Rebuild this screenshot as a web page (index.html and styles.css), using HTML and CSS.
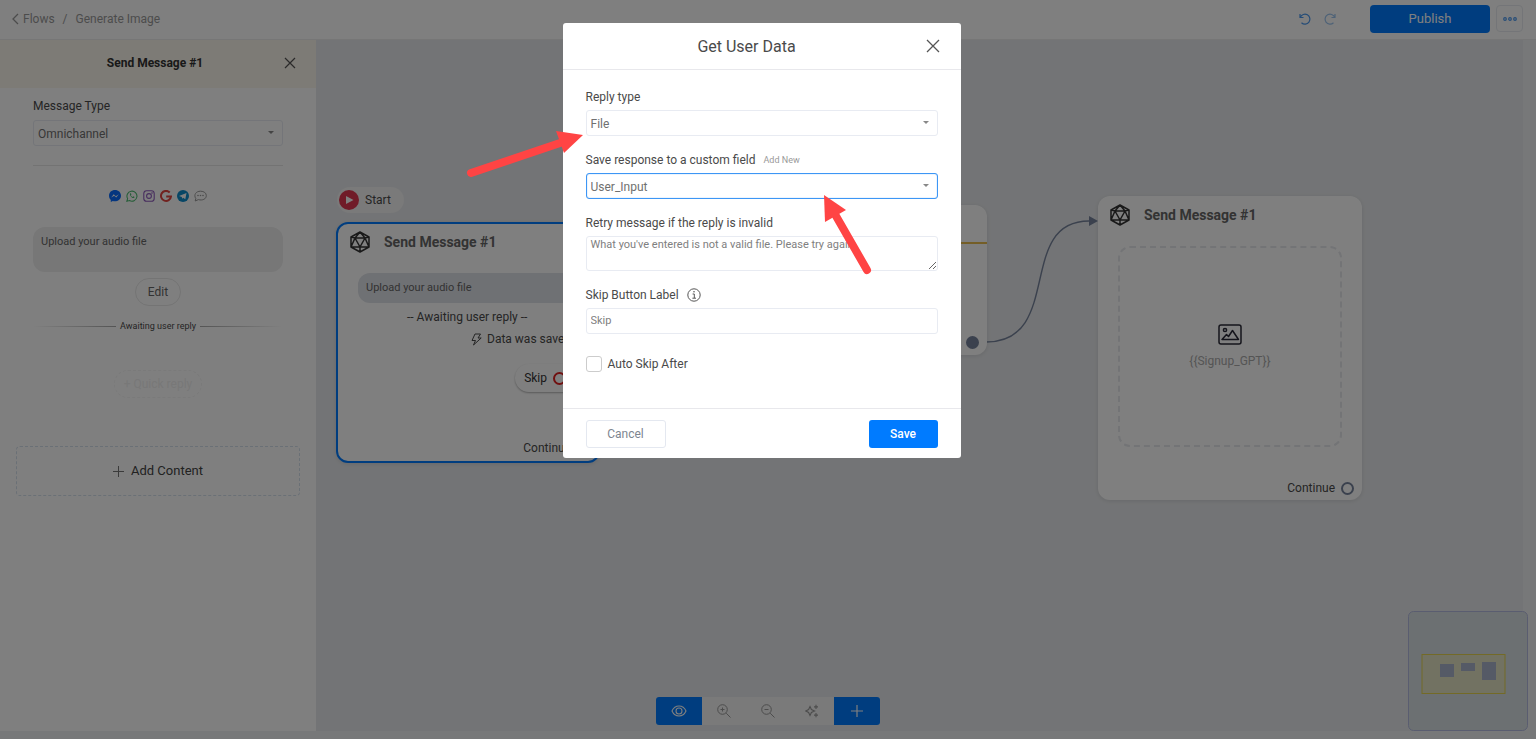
FILE: index.html
```html
<!DOCTYPE html>
<html lang="en">
<head>
    <meta charset="UTF-8">
    <meta name="viewport" content="width=device-width, initial-scale=1.0">
    <title>Generate Image - Flows</title>
    <link rel="stylesheet" href="styles.css">
</head>
<body>

    <!-- Shared icon -->
    <svg class="sprite" aria-hidden="true">
        <symbol id="icosahedron" viewBox="0 0 20 22">
            <path d="M10 1 L19 6 V16 L10 21 L1 16 V6 Z M10 1 L5 7 L1 6 M10 1 L15 7 L19 6 M5 7 H15 L10 16 Z M5 7 L1 16 L10 16 L19 16 L15 7 M10 16 V21" fill="none" stroke="currentColor" stroke-width="1.5" stroke-linejoin="round"/>
        </symbol>
    </svg>

    <header class="topbar">
        <nav class="breadcrumb">
            <a href="#" class="back">
                <svg width="7" height="12" viewBox="0 0 7 12"><path d="M6 1 L1 6 L6 11" fill="none" stroke="currentColor" stroke-width="1.3"/></svg>
                Flows
            </a>
            <span>/</span>
            <span>Generate Image</span>
        </nav>
        <div class="top-actions">
            <button class="icon-btn" aria-label="Undo">
                <svg width="12" height="12" viewBox="0 0 12 12"><path d="M1 1 V4.5 H4.5 M1.3 4.3 A5 5 0 1 1 2.5 9.8" fill="none" stroke="currentColor" stroke-width="1.2"/></svg>
            </button>
            <button class="icon-btn redo" aria-label="Redo">
                <svg width="12" height="12" viewBox="0 0 12 12"><path d="M11 1 V4.5 H7.5 M10.7 4.3 A5 5 0 1 0 9.5 9.8" fill="none" stroke="currentColor" stroke-width="1.2"/></svg>
            </button>
            <button class="btn-primary publish">Publish</button>
            <button class="more" aria-label="More">
                <svg width="14" height="4" viewBox="0 0 14 4"><g fill="none" stroke="currentColor" stroke-width="1.2"><circle cx="2" cy="2" r="1.3"/><circle cx="7" cy="2" r="1.3"/><circle cx="12" cy="2" r="1.3"/></g></svg>
            </button>
        </div>
    </header>

    <div class="workspace">
        <aside class="sidebar">
            <div class="sidebar-header">
                <h2>Send Message #1</h2>
                <button class="close" aria-label="Close panel">
                    <svg width="12" height="12" viewBox="0 0 12 12"><path d="M1 1 L11 11 M11 1 L1 11" stroke="currentColor" stroke-width="1.2"/></svg>
                </button>
            </div>
            <div class="sidebar-body">
                <label for="messageType">Message Type</label>
                <div class="select-wrap">
                    <select id="messageType"><option>Omnichannel</option></select>
                </div>
                <hr>
                <div class="channels">
                    <svg width="12" height="12" viewBox="0 0 12 12"><path d="M6 0 C2.6 0 0 2.4 0 5.7 C0 7.5 .7 8.9 1.8 9.9 V12 L3.8 11.1 C7.9 12.2 12 9.8 12 5.7 C12 2.4 9.4 0 6 0 Z" fill="#0a6cff"/><path d="M2.2 7.5 L4.7 4.2 L6.8 6.2 L9.8 4.2 L7.2 7.6 L5.2 5.8 Z" fill="#fff"/></svg>
                    <svg width="12" height="12" viewBox="0 0 12 12"><path d="M.9 11.2 L1.6 8.6 A5 5 0 1 1 3.5 10.5 Z" fill="none" stroke="#4ebc72" stroke-width="1.1"/><path d="M4.2 3.3 C3 4.3 5.7 8.8 8 8 L8.6 7 L7.2 6.3 L6.6 7 C5.9 6.8 5.1 5.8 4.9 5.2 L5.4 4.6 L4.9 3.3 Z" fill="#4ebc72"/></svg>
                    <svg width="12" height="12" viewBox="0 0 12 12"><g fill="none" stroke="#8f5bbd" stroke-width="1.1"><rect x=".8" y=".8" width="10.4" height="10.4" rx="2.8"/><circle cx="6" cy="6" r="2.4"/></g><circle cx="9" cy="3" r=".8" fill="#8f5bbd"/></svg>
                    <svg width="12" height="12" viewBox="0 0 12 12"><path d="M9.7 2.5 A5 5 0 1 0 11 6.4 H6.2" fill="none" stroke="#e2443f" stroke-width="2"/></svg>
                    <svg width="12" height="12" viewBox="0 0 12 12"><circle cx="6" cy="6" r="6" fill="#0f8ccb"/><path d="M2 6 L9.5 3 L8.3 9.3 L6.2 7.8 L5.2 8.8 L4.8 7 Z" fill="#fff"/></svg>
                    <svg width="13" height="12" viewBox="0 0 13 12"><path d="M1.2 11 L1.8 8.6 C-.6 4.8 2 1.2 6.5 1.2 C10 1.2 12.3 3 12.3 5.6 C12.3 9 8.5 10.8 4.4 9.6 Z" fill="none" stroke="#999" stroke-width="1"/><g fill="#999"><circle cx="4" cy="5.5" r=".8"/><circle cx="6.5" cy="5.5" r=".8"/><circle cx="9" cy="5.5" r=".8"/></g></svg>
                </div>
                <div class="message-bubble">Upload your audio file</div>
                <button class="edit">Edit</button>
                <div class="awaiting"><span>Awaiting user reply</span></div>
                <button class="quick-reply">+ Quick reply</button>
            </div>
            <button class="add-content">
                <svg width="11" height="11" viewBox="0 0 11 11"><path d="M5.5 0 V11 M0 5.5 H11" stroke="#777" stroke-width="1"/></svg>
                Add Content
            </button>
        </aside>

        <!-- Flow canvas -->
        <main class="canvas">
            <svg class="edge" width="120" height="140" viewBox="0 0 120 140">
                <path d="M4 132 C82 132 34 11 107 11" fill="none" stroke="#76839c" stroke-width="1.4"/>
                <path d="M107 6 L116 11 L107 16 Z" fill="#76839c"/>
            </svg>

            <div class="start">
                <svg width="20" height="20" viewBox="0 0 20 20"><circle cx="10" cy="10" r="10" fill="#e03650"/><path d="M7 6 L14.5 10 L7 14 Z" fill="#fff"/></svg>
                Start
            </div>

            <section class="node node-first">
                <h3><svg class="node-icon"><use href="#icosahedron"/></svg>Send Message #1</h3>
                <div class="node-bubble">Upload your audio file</div>
                <p class="node-wait">-- Awaiting user reply --</p>
                <p class="node-saved">
                    <svg width="11" height="13" viewBox="0 0 11 13"><path d="M4 1 H9.5 L7 5 H10.2 L2.5 12 L4.5 7.5 H1 Z" fill="none" stroke="currentColor" stroke-width="1" stroke-linejoin="round"/></svg>
                    Data was saved
                </p>
                <div class="skip-pill">Skip <span class="port port-red"></span></div>
                <div class="node-next">Continue <span class="port"></span></div>
            </section>

            <section class="node node-action">
                <div class="action-line"></div>
                <div class="node-next"><span class="port port-full"></span></div>
            </section>

            <section class="node node-image">
                <h3><svg class="node-icon"><use href="#icosahedron"/></svg>Send Message #1</h3>
                <div class="image-box">
                    <svg width="24" height="22" viewBox="0 0 24 22"><g fill="none" stroke="#2b2b38" stroke-width="1.5" stroke-linejoin="round"><rect x="1" y="1" width="22" height="19" rx="2"/><circle cx="7" cy="6" r="1.6"/><path d="M4 15.5 L8.5 10.5 L10.5 12.5 L14.5 6.5 L20.5 15.5 Z"/></g></svg>
                    {{Signup_GPT}}
                </div>
                <div class="node-next">Continue <span class="port"></span></div>
            </section>
        </main>

        <div class="toolbar">
            <button class="tool active" aria-label="Preview">
                <svg width="16" height="12" viewBox="0 0 16 12"><g fill="none" stroke="currentColor" stroke-width="1.1"><path d="M1 6 C4 -.6 12 -.6 15 6 C12 12.6 4 12.6 1 6 Z"/><circle cx="8" cy="6" r="3"/></g></svg>
            </button>
            <button class="tool" aria-label="Zoom in">
                <svg width="14" height="14" viewBox="0 0 14 14"><path d="M9.2 9.2 L13.5 13.5 M5.5 3.5 V7.5 M3.5 5.5 H7.5" stroke="currentColor"/><circle cx="5.5" cy="5.5" r="4.8" fill="none" stroke="currentColor"/></svg>
            </button>
            <button class="tool" aria-label="Zoom out">
                <svg width="14" height="14" viewBox="0 0 14 14"><path d="M9.2 9.2 L13.5 13.5 M3.5 5.5 H7.5" stroke="currentColor"/><circle cx="5.5" cy="5.5" r="4.8" fill="none" stroke="currentColor"/></svg>
            </button>
            <button class="tool" aria-label="Arrange">
                <svg width="14" height="14" viewBox="0 0 14 14"><path d="M5 2.5 L6.4 5.6 L9.5 7 L6.4 8.4 L5 11.5 L3.6 8.4 L.8 7 L3.6 5.6 Z M11 .8 V5 M9 2.9 H13 M11 9 V13.2 M9 11.1 H13" fill="none" stroke="currentColor" stroke-width="1.1"/></svg>
            </button>
            <button class="tool active" aria-label="Add block">
                <svg width="12" height="12" viewBox="0 0 12 12"><path d="M6 0 V12 M0 6 H12" stroke="currentColor" stroke-width="1.2"/></svg>
            </button>
        </div>

        <svg class="minimap" width="120" height="120" viewBox="0 0 120 120">
            <rect x=".5" y=".5" width="119" height="119" rx="5" fill="#d9e1e4" stroke="#b4bbe0"/>
            <rect x="14" y="43.5" width="83" height="39" fill="#e4e4c4" stroke="#e6d44e"/>
            <g fill="#abb4cc"><rect x="32" y="53" width="14" height="13"/><rect x="53" y="52" width="14" height="8"/><rect x="74" y="51" width="14" height="18"/></g>
        </svg>
    </div>

    <!-- Modal -->
    <div class="modal">
        <form class="modal-content">
            <div class="modal-header">
                <h1>Get User Data</h1>
                <button type="button" class="close" aria-label="Close">
                    <svg width="14" height="14" viewBox="0 0 14 14"><path d="M1 1 L13 13 M13 1 L1 13" stroke="currentColor" stroke-width="1.3"/></svg>
                </button>
            </div>
            <div class="modal-body">
                <div class="field">
                    <label for="replyType">Reply type</label>
                    <div class="select-wrap">
                        <select id="replyType"><option>File</option></select>
                    </div>
                </div>
                <div class="field">
                    <div class="label-row">
                        <label for="customField">Save response to a custom field</label>
                        <a href="#">Add New</a>
                    </div>
                    <div class="select-wrap selected">
                        <select id="customField"><option>User_Input</option></select>
                    </div>
                </div>
                <div class="field">
                    <label for="retryMessage">Retry message if the reply is invalid</label>
                    <textarea id="retryMessage" placeholder="What you've entered is not a valid file. Please try again."></textarea>
                </div>
                <div class="field">
                    <div class="label-row">
                        <label for="skipLabel">Skip Button Label</label>
                        <svg width="14" height="14" viewBox="0 0 14 14"><circle cx="7" cy="7" r="6.2" fill="none" stroke="#555"/><path d="M5.6 6 H7.3 V10 M5.4 10.2 H9" fill="none" stroke="#555"/><circle cx="7" cy="3.8" r=".8" fill="#555"/></svg>
                    </div>
                    <input type="text" id="skipLabel" placeholder="Skip">
                </div>
                <div class="check-row">
                    <input type="checkbox" id="autoSkip">
                    <label for="autoSkip">Auto Skip After</label>
                </div>
            </div>
            <div class="modal-footer">
                <button type="button" class="cancel">Cancel</button>
                <button type="button" class="btn-primary save">Save</button>
            </div>
        </form>
    </div>

    <!-- Pointer arrows -->
    <svg class="pointer pointer-type" width="120" height="50" viewBox="0 0 120 50">
        <path d="M6 42 L98 11" stroke="#ff4444" stroke-width="8" stroke-linecap="round"/>
        <path d="M118 4 L91 0 L99 22 Z" fill="#ff4444"/>
    </svg>
    <svg class="pointer pointer-field" width="60" height="84" viewBox="0 0 60 84">
        <path d="M47 75 L16 21" stroke="#ff4444" stroke-width="8" stroke-linecap="round"/>
        <path d="M4 0 L26 15 L5 27 Z" fill="#ff4444"/>
    </svg>

</body>
</html>
```
FILE: styles.css
```css
/* General Styling */
* {
    box-sizing: border-box;
}

body {
    font-family: Roboto, Arial, sans-serif;
    font-size: 12px;
    line-height: 18px;
    margin: 0;
    height: 100vh;
    display: flex;
    flex-direction: column;
    overflow: hidden;
    background: #eff0f2;
    color: #4a4a4a;
}

h1, h2, h3, p {
    margin: 0;
}

button, input, select, textarea {
    font: inherit;
    color: inherit;
}

button {
    display: flex;
    align-items: center;
    justify-content: center;
    padding: 0;
    border: none;
    background: none;
    cursor: pointer;
}

a {
    color: inherit;
    text-decoration: none;
}

.sprite {
    display: none;
}

.btn-primary {
    height: 28px;
    background: #007bff;
    color: white;
    border-radius: 3px;
    font-weight: 500;
}

/* Top bar */
.topbar {
    display: flex;
    justify-content: space-between;
    align-items: center;
    height: 40px;
    padding: 0 13px 2px 12px;
    background: white;
    border-bottom: 1px solid #ececec;
}

.breadcrumb {
    display: flex;
    gap: 8px;
    color: #999;
}

.back {
    display: flex;
    align-items: center;
    gap: 4px;
}

.top-actions {
    display: flex;
    align-items: center;
}

.icon-btn {
    width: 25px;
    color: #4a98ee;
}

.redo {
    color: #9cc4ee;
}

.publish {
    width: 120px;
    margin: 0 6px 0 28px;
    font-size: 13px;
    font-weight: 400;
    border-radius: 4px;
}

.more {
    width: 27px;
    height: 27px;
    border: 1px solid #e8ebf0;
    border-radius: 4px;
    color: #4a98ee;
}

.workspace {
    position: relative;
    flex: 1;
    display: flex;
    padding: 0 13px 8px 0;
}

/* Sidebar */
.sidebar {
    width: 316px;
    background: white;
}

.sidebar-header {
    display: flex;
    align-items: center;
    height: 48px;
    padding: 0 6px 2px 40px;
    background: #faf6ec;
}

.sidebar-header h2 {
    flex: 1;
    text-align: center;
    font-size: 12px;
    font-weight: 700;
    color: #333;
}

.close {
    width: 50px;
    height: 30px;
    color: #555;
}

.sidebar-header .close {
    width: 40px;
}

.sidebar-body {
    display: flex;
    flex-direction: column;
    padding: 9px 33px 0;
}

.select-wrap {
    position: relative;
}

.select-wrap::after {
    content: "";
    position: absolute;
    right: 9px;
    top: 11px;
    border: 3px solid transparent;
    border-top-color: #888;
    pointer-events: none;
}

select, input[type="text"], textarea {
    display: block;
    width: 100%;
    height: 26px;
    padding: 0 4px;
    border: 1px solid #e8ebf2;
    border-radius: 3px;
    background: white;
    color: #707070;
    appearance: none;
    outline: none;
}

select {
    padding-top: 2px;
}

.sidebar-body .select-wrap {
    margin-top: 5px;
}

hr {
    width: 100%;
    margin: 19px 0 24px;
    border: none;
    border-top: 1px solid #e6e6e6;
}

.channels {
    display: flex;
    justify-content: center;
    gap: 5px;
}

.message-bubble {
    height: 45px;
    margin-top: 25px;
    padding: 6px 8px;
    border-radius: 12px;
    background: #eee;
    font-size: 11px;
    color: #666;
}

.edit {
    align-self: center;
    width: 46px;
    height: 28px;
    margin-top: 6px;
    border: 1px solid #e8e8e8;
    border-radius: 14px;
    color: #666;
}

.awaiting {
    display: flex;
    align-items: center;
    gap: 4px;
    margin-top: 11px;
    font-size: 9px;
}

.awaiting::before, .awaiting::after {
    content: "";
    flex: 1;
    height: 1px;
    background: linear-gradient(90deg, white, #aaa);
}

.awaiting::after {
    background: linear-gradient(90deg, #aaa, white);
}

.quick-reply {
    align-self: center;
    width: 88px;
    height: 28px;
    margin-top: 35px;
    border: 1px dashed #f4f4f4;
    border-radius: 14px;
    color: #f0f0f0;
}

.add-content {
    width: calc(100% - 32px);
    height: 50px;
    margin: 48px 16px 0;
    gap: 7px;
    border: 1px dashed #d5e0ec;
    border-radius: 4px;
    font-size: 13px;
    color: #444;
}

/* Flow canvas */
.canvas {
    position: relative;
    flex: 1;
    background: #e7e9ec;
}

.edge {
    position: absolute;
    left: 666px;
    top: 170px;
}

.start {
    position: absolute;
    left: 21px;
    top: 147px;
    display: flex;
    align-items: center;
    gap: 6px;
    height: 26px;
    padding: 0 13px 0 2px;
    border-radius: 13px;
    background: #f4f4f4;
}

.node {
    position: absolute;
    width: 264px;
    display: flex;
    flex-direction: column;
    border-radius: 12px;
    background: white;
    box-shadow: 0 1px 4px rgba(0, 0, 0, 0.1);
}

.node-first {
    left: 20px;
    top: 182px;
    height: 241px;
    padding: 0 6px 4px 20px;
    border: 2px solid #007bff;
}

.node-action {
    left: 407px;
    top: 165px;
    height: 150px;
}

.node-image {
    left: 782px;
    top: 156px;
    height: 304px;
}

.node h3 {
    display: flex;
    align-items: center;
    gap: 14px;
    height: 38px;
    padding-left: 12px;
    font-size: 14px;
    font-weight: 700;
    color: #666;
}

.node-first h3 {
    height: 36px;
    padding-left: 0;
    margin-left: -8px;
}

.node-icon {
    width: 20px;
    height: 22px;
    color: #333;
}

.node-bubble {
    height: 30px;
    margin-top: 13px;
    padding: 6px 8px;
    border-radius: 12px;
    background: #dfe2e8;
    font-size: 11px;
    color: #666;
}

.node-wait {
    margin: 5px 0 0 49px;
}

.node-saved {
    display: flex;
    align-items: center;
    gap: 5px;
    margin: 4px 0 0 113px;
}

.skip-pill {
    display: flex;
    align-items: center;
    align-self: flex-end;
    gap: 6px;
    height: 28px;
    margin-top: 16px;
    padding: 0 26px 0 9px;
    border-radius: 14px;
    box-shadow: 0 1px 2px rgba(0, 0, 0, 0.3);
    color: #333;
}

.node-next {
    display: flex;
    align-items: center;
    justify-content: flex-end;
    gap: 6px;
    margin-top: auto;
    padding: 0 8px 3px 0;
}

.port {
    width: 13px;
    height: 13px;
    border: 2px solid #76839c;
    border-radius: 50%;
}

.port-red {
    border-color: #e02020;
}

.port-full {
    background: #76839c;
}

.node-first .node-next {
    padding: 0 2px 0 0;
}

.node-action .node-next {
    padding-bottom: 6px;
}

.action-line {
    height: 2px;
    margin-top: 37px;
    background: #e8bd4e;
}

.image-box {
    display: flex;
    flex-direction: column;
    align-items: center;
    justify-content: center;
    gap: 6px;
    height: 201px;
    margin: 12px 20px 0;
    border: 2px dashed #e6e8ec;
    border-radius: 12px;
    color: #aaa;
}

/* Zoom toolbar */
.toolbar {
    position: absolute;
    left: 50%;
    bottom: 14px;
    transform: translateX(-50%);
    display: flex;
    overflow: hidden;
    border-radius: 3px;
    background: #f4f4f4;
}

.tool {
    width: 44px;
    height: 28px;
    color: #999;
}

.tool.active {
    width: 46px;
    background: #007bff;
    color: white;
}

.minimap {
    position: absolute;
    right: 8px;
    bottom: 8px;
}

/* Modal */
.modal {
    position: fixed;
    inset: 0;
    display: flex;
    justify-content: center;
    align-items: flex-start;
    padding: 23px 13px 0 0;
    background: rgba(0, 0, 0, 0.5);
}

.modal-content {
    width: 398px;
    background: white;
    border-radius: 3px;
}

.modal-header {
    display: flex;
    align-items: center;
    height: 47px;
    padding: 0 3px 0 23px;
    border-bottom: 1px solid #e8e8ec;
}

.modal-header h1 {
    flex: 1;
    padding-top: 2px;
    text-align: center;
    font-size: 16px;
    font-weight: 400;
}

.modal-body {
    display: flex;
    flex-direction: column;
    gap: 15px;
    padding: 18px 23px 35px;
}

.field {
    display: flex;
    flex-direction: column;
    gap: 4px;
}

.label-row {
    display: flex;
    align-items: center;
    gap: 8px;
}

.label-row a {
    font-size: 9px;
    color: #999;
}

.selected select {
    border-color: #3d96f5;
    box-shadow: inset 0 0 1px #3d96f5;
}

.field textarea {
    height: 35px;
    line-height: 16px;
    font-size: 11px;
}

.field input {
    padding-bottom: 2px;
    font-size: 11px;
}

::placeholder {
    color: #808080;
}

.check-row {
    display: flex;
    align-items: center;
    gap: 6px;
    margin-top: 6px;
}

.check-row input {
    width: 16px;
    height: 16px;
    margin: 0;
    border: 1px solid #ccc;
    border-radius: 3px;
    appearance: none;
}

.modal-footer {
    display: flex;
    justify-content: space-between;
    align-items: center;
    height: 50px;
    padding: 0 23px;
    border-top: 1px solid #e8e8ec;
}

.cancel {
    width: 80px;
    height: 28px;
    border: 1px solid #e4e8f0;
    border-radius: 3px;
    color: #7d8590;
}

.save {
    width: 69px;
}

/* Pointer arrows */
.pointer {
    position: absolute;
}

.pointer-type {
    left: 465px;
    top: 131px;
}

.pointer-field {
    left: 820px;
    top: 195px;
}
```
